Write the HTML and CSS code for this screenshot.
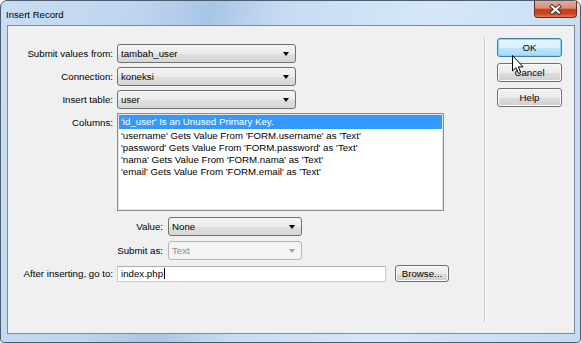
FILE: index.html
```html
<!DOCTYPE html>
<html lang="en">
  <head>
    <meta charset="UTF-8" />
    <title>Insert Record</title>
    <link rel="stylesheet" href="styles.css">
  </head>
  <body>
    <div class="window">
      <div class="titlebar">
        <span class="title">Insert Record</span>
        <span class="close">
          <svg width="13" height="11" viewBox="-6.5 -5.5 13 11">
            <path d="M-3.5 -3 L3.5 3 M3.5 -3 L-3.5 3" stroke="#4a3530" stroke-width="4" stroke-linecap="square" />
            <path d="M-3.5 -3 L3.5 3 M3.5 -3 L-3.5 3" stroke="#fff" stroke-width="2" stroke-linecap="square" />
          </svg>
        </span>
      </div>

      <div class="client">
        <div class="form">
          <div class="row">
            <label>Submit values from:</label>
            <div class="combo"><span>tambah_user</span><i class="arrow"></i></div>
          </div>
          <div class="row">
            <label>Connection:</label>
            <div class="combo"><span>koneksi</span><i class="arrow"></i></div>
          </div>
          <div class="row">
            <label>Insert table:</label>
            <div class="combo"><span>user</span><i class="arrow"></i></div>
          </div>
          <div class="row row-list">
            <label>Columns:</label>
            <div class="listbox">
              <div class="item selected">'id_user' Is an Unused Primary Key.</div>
              <div class="item">'username' Gets Value From 'FORM.username' as 'Text'</div>
              <div class="item">'password' Gets Value From 'FORM.password' as 'Text'</div>
              <div class="item">'nama' Gets Value From 'FORM.nama' as 'Text'</div>
              <div class="item">'email' Gets Value From 'FORM.email' as 'Text'</div>
            </div>
          </div>

          <div class="subrow first">
            <label>Value:</label>
            <div class="combo short"><span>None</span><i class="arrow"></i></div>
          </div>
          <div class="subrow">
            <label>Submit as:</label>
            <div class="combo short disabled"><span>Text</span><i class="arrow"></i></div>
          </div>

          <div class="row row-goto">
            <label>After inserting, go to:</label>
            <div class="textbox">index.php<span class="caret"></span></div>
            <button class="btn browse">Browse...</button>
          </div>
        </div>

        <div class="sep"></div>

        <div class="actions">
          <button class="btn default">OK</button>
          <button class="btn">Cancel</button>
          <button class="btn">Help</button>
          <!-- mouse pointer over OK -->
          <svg class="pointer" width="13" height="20" viewBox="0 0 13 20">
            <path d="M0.5 0.5 L0.5 16 L4 12.7 L6.6 18.6 L8.8 17.6 L6.3 11.9 L11 11.9 Z" fill="#fff" stroke="#000" stroke-width="1" stroke-linejoin="miter" />
          </svg>
        </div>
      </div>
    </div>
  </body>
</html>
```

FILE: styles.css
```css
html,
body {
  margin: 0;
  background: #ffffff;
}
body {
  font-family: "Liberation Sans", Arial, sans-serif;
  font-size: 9.7px;
  color: #000;
}

/* window frame */
.window {
  width: 581px;
  height: 343px;
  box-sizing: border-box;
  display: flex;
  flex-direction: column;
  padding: 0 5px 8px 6px;
  border: 1px solid #4e5d6d;
  border-radius: 7px 7px 4px 4px;
  background: linear-gradient(100deg, #c9def4 0%, #bdd5ef 22%, #a9c5e6 33%, #c6dcf3 45%, #d6e7f9 68%, #c3daf3 100%);
}
.titlebar {
  height: 24px;
  display: flex;
  align-items: center;
  margin: 0 -5px 0 -6px;
  padding-left: 5px;
}
.title {
  font-size: 9.6px;
  padding-top: 3px;
}
.close {
  align-self: flex-start;
  margin-left: auto;
  margin-right: 3px;
  width: 43px;
  height: 17px;
  box-sizing: border-box;
  display: flex;
  align-items: center;
  justify-content: center;
  border: 1px solid #6b2a1b;
  border-top: none;
  border-radius: 0 0 4px 4px;
  background: linear-gradient(#e9ab9a 0%, #d98c78 45%, #c2401d 52%, #c8451f 78%, #e07c52 100%);
}

/* client area */
.client {
  flex: 1;
  display: flex;
  border: 1px solid #7d8c9c;
  background: #f0f0f0;
}
.form {
  width: 476px;
  padding: 18px 0 0 10px;
  box-sizing: border-box;
}
.row {
  display: flex;
  align-items: center;
  margin-bottom: 4px;
}
.row label,
.subrow label {
  width: 95px;
  text-align: right;
  margin-right: 4px;
  white-space: nowrap;
}
.row-list {
  align-items: flex-start;
}
.row-list label {
  padding-top: 4px;
}
.subrow {
  display: flex;
  align-items: center;
  margin-bottom: 5px;
}
.subrow.first {
  margin-top: 6px;
}
.subrow label {
  width: 145px;
  margin-right: 5px;
}
.row-goto label {
  width: 95px;
}

/* dropdowns */
.combo {
  width: 179px;
  height: 19px;
  box-sizing: border-box;
  display: flex;
  align-items: center;
  padding: 0 6px 0 3px;
  border: 1px solid #707070;
  border-radius: 3px;
  background: linear-gradient(#f4f4f4 0%, #ececec 50%, #e0e0e0 51%, #d6d6d6 100%);
}
.combo span {
  flex: 1;
}
.combo.short {
  width: 134px;
}
.arrow {
  width: 0;
  height: 0;
  border-left: 3.5px solid transparent;
  border-right: 3.5px solid transparent;
  border-top: 4px solid #000;
}
.combo.disabled {
  border-color: #b3b7ba;
  background: #f4f4f4;
  color: #8d8d8d;
}
.combo.disabled .arrow {
  border-top-color: #a8a8a8;
}

/* list of columns */
.listbox {
  width: 327px;
  height: 98px;
  box-sizing: border-box;
  padding: 1px;
  border: 1px solid #8a8e94;
  box-shadow: inset 0 0 0 1px #e4e4e4;
  background: #fff;
}
.item {
  height: 12px;
  line-height: 12px;
  padding-left: 2px;
  white-space: nowrap;
}
.item.selected {
  height: 14px;
  line-height: 14px;
  margin-bottom: 1px;
  background: #3399ff;
  color: #fff;
}

/* text field */
.textbox {
  width: 269px;
  height: 16px;
  box-sizing: border-box;
  display: flex;
  align-items: center;
  padding-left: 3px;
  border: 1px solid #c5ccd6;
  border-top-color: #abadb3;
  background: #fff;
}
.caret {
  width: 1px;
  height: 11px;
  margin-left: 1px;
  background: #000;
}

/* buttons */
.btn {
  font: inherit;
  color: #000;
  padding: 0;
  height: 19px;
  width: 65px;
  border: 1px solid #707070;
  border-radius: 3px;
  background: linear-gradient(#f3f3f3 0%, #ebebeb 50%, #dddddd 51%, #cfcfcf 100%);
  box-shadow: inset 0 0 0 1px #fbfbfb;
}
.btn.default {
  border-color: #3c7fb1;
  background: linear-gradient(#eaf6fd 0%, #d9f0fc 50%, #bee6fd 51%, #a7d9f5 100%);
  box-shadow: inset 0 0 0 1px #7ad7f7;
}
.browse {
  width: 54px;
  height: 17px;
  margin-left: 9px;
}

.sep {
  width: 1px;
  margin: 11px 0 11px;
  border-left: 1px solid #cccccc;
  background: #fcfcfc;
}

.actions {
  position: relative;
  display: flex;
  flex-direction: column;
  gap: 6px;
  padding: 12px 0 0 11px;
}
.pointer {
  position: absolute;
  left: 26px;
  top: 29px;
}
```
